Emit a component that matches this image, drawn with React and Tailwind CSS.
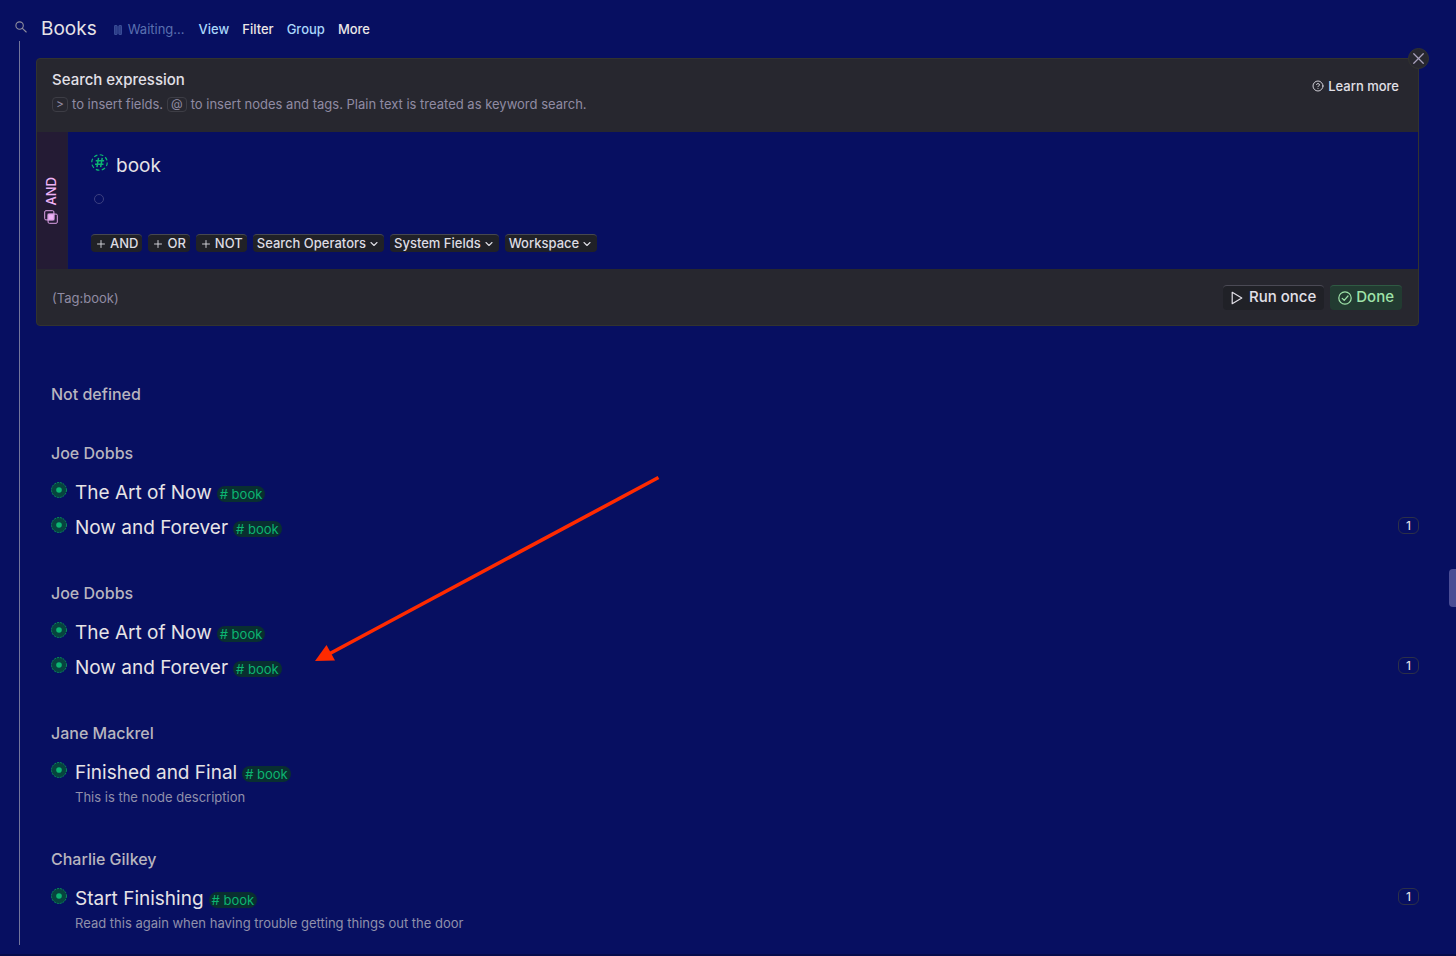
import { ChevronDown, CircleQuestionMark, Plus, X } from 'lucide-react'

const NAV_ITEMS = [
  { label: 'View', color: 'text-[#a9d6fb]' },
  { label: 'Filter', color: 'text-[#ebe6e6]' },
  { label: 'Group', color: 'text-[#a9d6fb]' },
  { label: 'More', color: 'text-[#ebe6e6]' },
]

const OPERATORS = ['AND', 'OR', 'NOT']
const MENUS = ['Search Operators', 'System Fields', 'Workspace']

const DOBBS_BOOKS = [
  { title: 'The Art of Now' },
  { title: 'Now and Forever', refs: 1 },
]

const GROUPS = [
  { name: 'Not defined', items: [] },
  { name: 'Joe Dobbs', items: DOBBS_BOOKS },
  { name: 'Joe Dobbs', items: DOBBS_BOOKS },
  { name: 'Jane Mackrel', items: [{ title: 'Finished and Final', description: 'This is the node description' }] },
  {
    name: 'Charlie Gilkey',
    items: [
      {
        title: 'Start Finishing',
        description: 'Read this again when having trouble getting things out the door',
        refs: 1,
      },
    ],
  },
]

// ── Icons ────────────────────────────────────────────────────────────
const SearchIcon = () => (
  <svg className="w-3 h-3 shrink-0" viewBox="0 0 12 12" fill="none" stroke="#8f8e9e" strokeWidth="1.1">
    <circle cx="4.6" cy="4.6" r="3.7" />
    <path d="M7.4 7.4 11.2 11" strokeLinecap="round" />
  </svg>
)

const NodeBullet = () => (
  <svg className="w-4 h-4 shrink-0" viewBox="0 0 16 16" fill="none">
    <circle cx="8" cy="8" r="7.5" fill="#07443f" stroke="#0a8f5c" strokeDasharray="2 1" />
    <circle cx="8" cy="8" r="2.8" fill="#0cb572" />
  </svg>
)

const TagBullet = () => (
  <svg className="w-[17px] h-[17px] shrink-0" viewBox="0 0 18 18" fill="none" stroke="#0cb572">
    <circle cx="9" cy="9" r="8.2" strokeWidth="1.3" strokeDasharray="3.9 2.54" />
    <path d="M8 4.2 6.3 13.8M11.9 4.2 10.2 13.8M5 7.2h8.9M4.3 10.9h8.9" strokeWidth="1.6" />
  </svg>
)

const IntersectIcon = () => (
  <svg className="w-[14px] h-[14px]" viewBox="0 0 14 14" fill="none" stroke="#dca0e6">
    <rect x="0.7" y="0.7" width="9.2" height="9.2" rx="1.2" />
    <rect x="4.1" y="4.1" width="9.2" height="9.2" rx="1.2" />
    <rect x="4.1" y="4.1" width="5.8" height="5.8" fill="#eeb2f5" />
  </svg>
)

const PauseIcon = () => (
  <svg className="w-2 h-[10px]" viewBox="0 0 8 10" fill="#2b3c86" stroke="#4a60a8" strokeWidth="0.7">
    <rect x="0.4" y="0.5" width="2.8" height="9" rx="0.6" />
    <rect x="4.8" y="0.5" width="2.8" height="9" rx="0.6" />
  </svg>
)

const PlayIcon = () => (
  <svg className="w-3 h-[14px]" viewBox="0 0 12 14" fill="none" stroke="currentColor" strokeWidth="1.2">
    <path d="M1.2 1.3v11.4L10.8 7Z" strokeLinejoin="round" />
  </svg>
)

const DoneIcon = () => (
  <svg className="w-[14px] h-[14px]" viewBox="0 0 14 14" fill="none" stroke="currentColor" strokeWidth="1.2">
    <circle cx="7" cy="7" r="6.2" />
    <path d="M4.2 7.4 6.2 9.3 10 5" strokeLinecap="round" strokeLinejoin="round" />
  </svg>
)

// ── Header ───────────────────────────────────────────────────────────
const Header = () => (
  <header className="flex items-center h-[58px] pl-[5px]">
    <h1 className="pt-px text-[19px] text-[#e6e3e6]">Books</h1>
    <div className="flex items-center gap-[6px] ml-[17px] pt-px text-[13px] text-[#5a6fb0]">
      <PauseIcon />
      <span>Waiting...</span>
    </div>
    <nav className="flex gap-[13px] ml-[14px] pt-px text-[13px] font-medium">
      {NAV_ITEMS.map((item) => (
        <button key={item.label} className={item.color}>{item.label}</button>
      ))}
    </nav>
  </header>
)

// ── Search expression panel ──────────────────────────────────────────
const Key = ({ children }) => (
  <kbd className="inline-flex items-center justify-center min-w-4 h-[15px] px-[3px] rounded border border-[#3d3d45] font-[Inter,sans-serif] text-[12px]">
    {children}
  </kbd>
)

const CHIP = 'flex items-center h-[18px] px-1 rounded bg-[#202127] border-t border-[#47484f] text-[13px] font-medium text-[#dddce3]'

const SearchPanel = () => (
  <section className="relative rounded border border-[#32332f] bg-[#27272f]">
    <button
      aria-label="Close"
      className="absolute -top-[11px] -right-[11px] flex items-center justify-center w-[21px] h-[21px] rounded-full bg-[#27272f] border border-[#32332f] text-[#a9a2bc]"
    >
      <X size={19} strokeWidth={1.6} />
    </button>

    <div className="flex items-start justify-between h-[73px] pl-[15px] pr-[19px]">
      <div className="pt-[11px]">
        <h2 className="text-[15px] leading-5 font-medium text-[#e2e0e8]">Search expression</h2>
        <p className="flex items-center gap-1 mt-1 text-[13px] leading-5 text-[#908ba3]">
          <Key>&gt;</Key> to insert fields. <Key>@</Key> to insert nodes and tags. Plain text is treated as keyword search.
        </p>
      </div>
      <a href="#learn" className="flex items-center gap-1 mt-[17px] text-[13px] leading-5 font-medium text-[#e2e0e8]">
        <CircleQuestionMark size={12} strokeWidth={1.8} /> Learn more
      </a>
    </div>

    <div className="flex h-[137px] bg-[#070f61]">
      <div className="flex flex-col items-center justify-center gap-1 w-[31px] pr-[3px] bg-[#241b34] border-r border-[#1f1e3a]">
        <span className="[writing-mode:vertical-rl] rotate-180 text-[13px] leading-4 font-medium text-[#eeb2f5]">AND</span>
        <IntersectIcon />
      </div>
      <div className="flex flex-col pl-[23px] pt-[19px]">
        <div className="flex gap-2 text-[19px] leading-[30px] text-[#e6e3e6]">
          <span className="pt-[3px]"><TagBullet /></span>
          book
        </div>
        <span className="w-[10px] h-[10px] mt-[13px] ml-[3px] rounded-full border border-[#3c4080]" />
        <div className="flex gap-[6px] mt-[30px]">
          {OPERATORS.map((op) => (
            <button key={op} className={`${CHIP} gap-[3px]`}>
              <Plus size={12} strokeWidth={1.8} />
              {op}
            </button>
          ))}
          {MENUS.map((menu) => (
            <button key={menu} aria-haspopup="menu" className={`${CHIP} gap-[2px]`}>
              {menu}
              <ChevronDown size={12} strokeWidth={2.2} />
            </button>
          ))}
        </div>
      </div>
    </div>

    <div className="flex items-center justify-between h-14 pl-[15px] pr-4">
      <span className="pt-[3px] text-[13px] text-[#908ba3]">(Tag:book)</span>
      <div className="flex gap-[6px]">
        <button className="flex items-center gap-[6px] h-[25px] px-2 rounded border-t border-[#4b4a55] bg-[#202127] text-[15px] font-medium text-[#e2e0e8]">
          <PlayIcon />
          Run once
        </button>
        <button className="flex items-center gap-1 h-[25px] px-2 rounded border-t border-[#2f5a43] bg-[#223b31] text-[15px] font-medium text-[#9fe3a9]">
          <DoneIcon />
          Done
        </button>
      </div>
    </div>
  </section>
)

// ── Results ──────────────────────────────────────────────────────────
const ResultRow = ({ item }) => (
  <li className="flex items-start pb-[3px]">
    <span className="pt-[6px]"><NodeBullet /></span>
    <div className="flex-1 ml-2">
      <div className="flex items-center h-8 pt-[2px]">
        <span className="text-[19px] text-[#e6e3e6]">{item.title}</span>
        <a href="#book" className="h-4 mt-[2px] ml-[5px] px-[3px] rounded-full bg-[#092f30] text-[13px] leading-4 text-[#0cb572]">
          # book
        </a>
      </div>
      {item.description && <p className="h-[21px] text-[13px] leading-[18px] text-[#9090ab]">{item.description}</p>}
    </div>
    {item.refs && (
      <button className="flex items-center justify-center w-[21px] h-[17px] mt-[6px] rounded-md border border-[#2c3048] text-[12px] font-medium text-[#dddce3]">
        {item.refs}
      </button>
    )}
  </li>
)

const ResultGroup = ({ group }) => (
  <section>
    <h3 className="text-[16px] leading-6 font-medium text-[#b8b5bf]">{group.name}</h3>
    {group.items.length > 0 && (
      <ul className="mt-[11px]">
        {group.items.map((item) => <ResultRow key={item.title} item={item} />)}
      </ul>
    )}
  </section>
)

const Arrow = () => (
  <svg className="absolute left-[315px] top-[475px] w-[346px] h-[187px] pointer-events-none" viewBox="0 0 346 187">
    <path d="M343.5 2.5 14 179" stroke="#ff2a00" strokeWidth="3.6" />
    <path d="M0 186 11.5 170 20 185.5Z" fill="#ff2a00" />
  </svg>
)

export default function App() {
  return (
    <div className="relative flex min-h-screen bg-[#070f61] border-b-2 border-[#050b4c] font-[Inter,sans-serif]">
      <aside className="flex flex-col items-center w-9 pt-[21px] pr-[3px] pb-[9px] pl-2">
        <SearchIcon />
        <div className="flex-1 w-px mt-2 mr-[2px] bg-[#73759b]" />
      </aside>
      <main className="flex-1 pr-[37px]">
        <Header />
        <SearchPanel />
        <div className="flex flex-col gap-[35px] pt-[56px] pl-[15px]">
          {GROUPS.map((group, i) => <ResultGroup key={i} group={group} />)}
        </div>
      </main>
      <Arrow />
      <div className="absolute right-0 top-[569px] w-[7px] h-[38px] rounded-l bg-[#4a4d94]" />
    </div>
  )
}
